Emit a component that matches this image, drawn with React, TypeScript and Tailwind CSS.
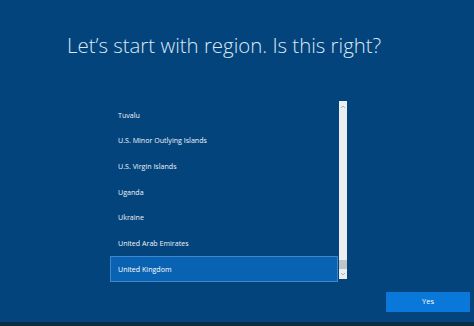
const regions = [
  'Tuvalu',
  'U.S. Minor Outlying Islands',
  'U.S. Virgin Islands',
  'Uganda',
  'Ukraine',
  'United Arab Emirates',
  'United Kingdom',
]

export default function App() {
  const selected = 'United Kingdom'

  return (
    <div className="flex h-[326px] w-[474px] flex-col overflow-hidden bg-[#04447c] font-['Open_Sans','Noto_Sans',sans-serif]">
      <div className="flex flex-1 flex-col">
        {/* Heading */}
        <h1 className="mt-[30px] pl-[67px] text-[20.4px] font-light leading-[30px] text-[#dce9f5]">
          Let’s start with region. Is this right?
        </h1>

        {/* Region list */}
        <div className="ml-[110px] mt-[41px] flex w-[237px]">
          <ul className="flex w-[228px] flex-col pt-[1px]">
            {regions.map((r) => (
              <li
                key={r}
                className={`flex h-[25.7px] items-center pl-[7px] text-[7.1px] ${
                  r === selected
                    ? 'border border-[#3c86cc] bg-[#0a62b2] text-white'
                    : 'border border-transparent text-[#eef4fa]'
                }`}
              >
                {r}
              </li>
            ))}
          </ul>
          {/* Scrollbar */}
          <div className="ml-[1px] flex h-[178px] w-[8px] flex-col items-center bg-[#eceff2]">
            <svg width="6" height="8" viewBox="0 0 6 8" className="mt-[2px]">
              <path d="M1 5 L3 3 L5 5" fill="none" stroke="#9aa3ab" strokeWidth="0.8" />
            </svg>
            <div className="flex-1" />
            <div className="h-[9px] w-[8px] bg-[#c2c5c8]" />
            <svg width="6" height="10" viewBox="0 0 6 10">
              <path d="M1 4 L3 6 L5 4" fill="none" stroke="#9aa3ab" strokeWidth="0.8" />
            </svg>
          </div>
        </div>

        {/* Bottom bar */}
        <div className="mt-auto flex justify-end pb-[10px] pr-[4px]">
          <button className="h-[20px] w-[84px] bg-[#0a78d8] text-[7.5px] text-white">Yes</button>
        </div>
      </div>
      <div className="h-[4px] bg-[#0c2b44]" />
    </div>
  )
}
